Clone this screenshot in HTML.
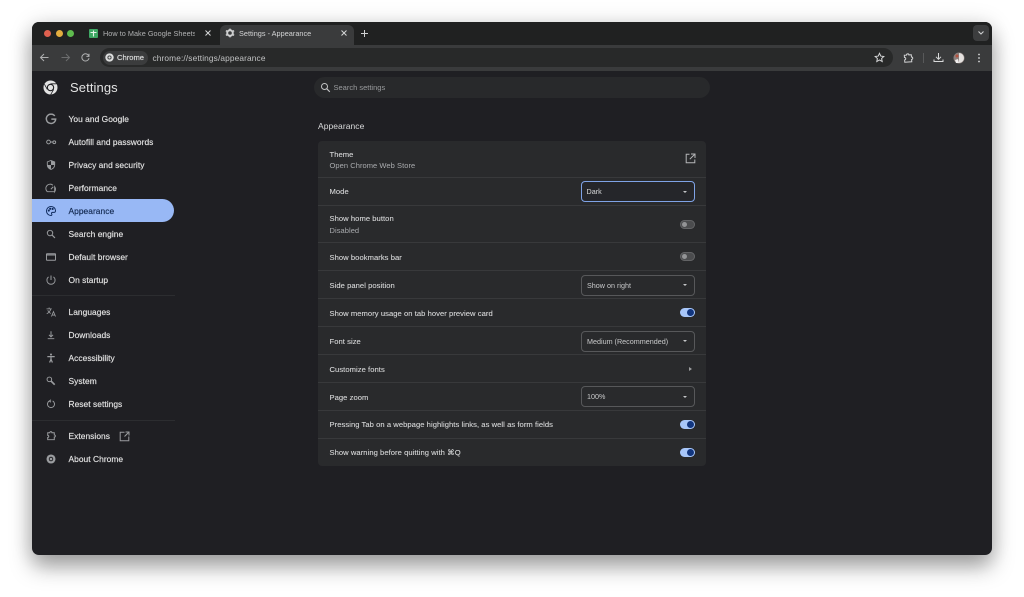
<!DOCTYPE html>
<html lang="en"><head><meta charset="utf-8"><title>Settings - Appearance</title>
<style>
html,body{margin:0;padding:0;background:#fff;width:1024px;height:597px;overflow:hidden}
body{font-family:"Liberation Sans",sans-serif;position:relative}
#all{position:absolute;left:0;top:0;width:1024px;height:597px;filter:blur(.3px)}
.a{position:absolute}
.t{position:absolute;white-space:nowrap;line-height:12px}
#win{position:absolute;left:32px;top:22px;width:960px;height:533px;border-radius:7px;background:#1f1f23;box-shadow:0 12px 22px rgba(0,0,0,.34),0 2px 24px rgba(0,0,0,.14);overflow:hidden}
.nav{position:absolute;left:68.5px;font-size:8.4px;color:#e3e3e3;line-height:12px;white-space:nowrap;font-weight:400;letter-spacing:.05px;-webkit-text-stroke:.15px #e3e3e3}
.ic{position:absolute;left:44px;width:14px;height:14px;fill:none;stroke:#9a9c9f;stroke-width:1.2;transform:scale(.82)}
.row{position:absolute;left:318px;width:388px;border-top:1px solid #38393b}
.lb{position:absolute;left:329.5px;font-size:7.6px;color:#d6d7d8;line-height:12px;white-space:nowrap;letter-spacing:.057px;-webkit-text-stroke:.1px #d6d7d8}
.sub{color:#a9abae;font-size:7.5px;letter-spacing:.06px;-webkit-text-stroke:0}
.sel{position:absolute;left:581px;width:112px;height:19px;border:1px solid #57585a;border-radius:4px;font-size:7.2px;color:#c9cacb;line-height:19px;text-indent:5px;box-sizing:content-box}
.sel:after{content:"";position:absolute;right:7px;top:8.500px;border:2px solid transparent;border-top:2.400px solid #c4c5c7;border-bottom:0}
.tg{position:absolute;left:680px;width:15px;height:9px;border-radius:5px}
.on{background:#a8c7fa}.on:after{content:"";position:absolute;right:1px;top:1px;width:7px;height:7px;border-radius:50%;background:#12367f}
.off{background:#4b4c4e;box-shadow:inset 0 0 0 1px #626365}.off:after{content:"";position:absolute;left:2px;top:2px;width:5px;height:5px;border-radius:50%;background:#939496}
.sep{position:absolute;left:32px;width:143px;height:1px;background:#2c2d30}
</style></head><body><div id="all">
<div id="win"></div>
<div class="a" style="left:32px;top:22px;width:960px;height:24px;background:#202121;border-radius:7px 7px 0 0"></div>
<div class="a" style="left:32px;top:45px;width:960px;height:26px;background:#3a3b3c"></div>
<div class="a" style="left:44px;top:30px;width:7px;height:7px;border-radius:50%;background:#e0604f"></div>
<div class="a" style="left:56px;top:30px;width:7px;height:7px;border-radius:50%;background:#e3ad3f"></div>
<div class="a" style="left:67px;top:30px;width:7px;height:7px;border-radius:50%;background:#5fbb4e"></div>

<svg class="a" style="left:89px;top:29px" width="9" height="9" viewBox="0 0 9 9"><rect width="9" height="9" rx="1" fill="#3fa764"/><path d="M1.500 3.500h6M4.500 1.500v6" stroke="#e6f3ea" stroke-width="1.100"/></svg>
<div class="t" style="left:103px;top:27.500px;font-size:7.300px;color:#b0b1b2;width:92px;overflow:hidden;letter-spacing:.02px">How to Make Google Sheets Da</div>
<svg class="a" style="left:204px;top:29px" width="8" height="8" viewBox="0 0 8 8"><path d="M1.500 1.500l5 5M6.500 1.500l-5 5" stroke="#d5d6d7" stroke-width="1"/></svg>

<div class="a" style="left:220px;top:25px;width:134px;height:20px;background:#3a3b3c;border-radius:6px 6px 0 0"></div>
<svg class="a" style="left:225px;top:28px" width="10" height="10" viewBox="0 0 10 10"><circle cx="5" cy="5" r="2.800" fill="none" stroke="#cfd0d1" stroke-width="2"/><path d="M5 .6v2M5 7.400v2M.9 2.700l1.800 1M7.300 6.300l1.800 1M.9 7.300l1.800-1M7.300 3.700l1.800-1" stroke="#cfd0d1" stroke-width="1.500"/></svg>
<div class="t" style="left:239px;top:27.500px;font-size:7.300px;color:#d4d5d6;letter-spacing:.02px">Settings - Appearance</div>
<svg class="a" style="left:340px;top:29px" width="8" height="8" viewBox="0 0 8 8"><path d="M1.500 1.500l5 5M6.500 1.500l-5 5" stroke="#d5d6d7" stroke-width="1"/></svg>
<svg class="a" style="left:360px;top:29px" width="9" height="9" viewBox="0 0 9 9"><path d="M4.500 1v7M1 4.500h7" stroke="#cfd0d1" stroke-width="1"/></svg>

<div class="a" style="left:973px;top:25px;width:16px;height:16px;border-radius:4px;background:#3c3d3e"></div>
<svg class="a" style="left:977px;top:30px" width="8" height="6" viewBox="0 0 8 6"><path d="M1.500 1.500L4 4l2.500-2.500" fill="none" stroke="#cfd0d1" stroke-width="1.100"/></svg>

<svg class="a" style="left:39px;top:52px" width="11" height="11" viewBox="0 0 11 11"><path d="M9.500 5.500h-8M5 2L1.500 5.500 5 9" fill="none" stroke="#aeafb0" stroke-width="1"/></svg>
<svg class="a" style="left:60px;top:52px" width="11" height="11" viewBox="0 0 11 11"><path d="M1.500 5.500h8M6 2l3.500 3.500L6 9" fill="none" stroke="#6c6d6e" stroke-width="1"/></svg>
<svg class="a" style="left:80px;top:52px" width="11" height="11" viewBox="0 0 11 11"><path d="M8.800 4A3.600 3.600 0 1 0 9 6.200M9 1.800v2.600H6.400" fill="none" stroke="#aeafb0" stroke-width="1"/></svg>

<div class="a" style="left:100px;top:48px;width:793px;height:19px;border-radius:10px;background:#282929"></div>
<div class="a" style="left:103px;top:50.500px;width:45px;height:14px;border-radius:7px;background:#3b3c3d"></div>
<svg class="a" style="left:105px;top:53px" width="9" height="9" viewBox="0 0 14 14"><circle cx="7" cy="7" r="6.500" fill="#dcdddd"/><circle cx="7" cy="7" r="3.200" fill="#3b3c3d"/><circle cx="7" cy="7" r="1.800" fill="#dcdddd"/></svg>
<div class="t" style="left:117px;top:52px;font-size:7.600px;color:#dcdddd;-webkit-text-stroke:.15px #dcdddd">Chrome</div>
<div class="t" style="left:152.500px;top:52px;font-size:8.300px;color:#c2c3c4;letter-spacing:.135px">chrome://settings/appearance</div>

<svg class="a" style="left:874px;top:52px" width="11" height="11" viewBox="0 0 11 11"><path d="M5.500 1.300l1.300 2.800 3 .4-2.200 2 .6 3-2.700-1.500L2.800 9.500l.6-3-2.200-2 3-.4z" fill="none" stroke="#d5d6d7" stroke-width="1"/></svg>
<svg class="a" style="left:902px;top:52px" width="12" height="12" viewBox="0 0 12 12"><path d="M2.500 3h2.200a1.200 1.200 0 0 1 2.400 0h2.400v2.300a1.200 1.200 0 0 1 0 2.400V10H2.500V7.700a1.200 1.200 0 0 0 0-2.400z" transform="rotate(-4 6 6)" fill="none" stroke="#d2d3d4" stroke-width="1"/></svg>
<div class="a" style="left:923px;top:53px;width:1px;height:10px;background:#58595a"></div>
<svg class="a" style="left:933px;top:52px" width="11" height="11" viewBox="0 0 11 11"><path d="M5.500 1v6M3 4.800l2.500 2.500L8 4.800M1 7.500v2h9v-2" fill="none" stroke="#d8d9da" stroke-width="1"/></svg>
<svg class="a" style="left:953px;top:52px" width="12" height="12" viewBox="0 0 12 12"><circle cx="6" cy="6" r="5.500" fill="#8b7f7c"/><path d="M6 1a5 5 0 0 1 0 10z" fill="#e4e1df"/><circle cx="4" cy="4" r="1.500" fill="#b5523f"/><path d="M2 8l3-1 1 4H3z" fill="#f0eeee"/></svg>
<svg class="a" style="left:977px;top:52px" width="4" height="12" viewBox="0 0 4 12"><circle cx="2" cy="2.500" r=".9" fill="#d5d6d7"/><circle cx="2" cy="6" r=".9" fill="#d5d6d7"/><circle cx="2" cy="9.500" r=".9" fill="#d5d6d7"/></svg>

<svg class="a" style="left:43px;top:80px" width="15" height="15" viewBox="0 0 15 15"><circle cx="7.500" cy="7.500" r="7" fill="#e3e3e3"/><circle cx="7.500" cy="7.500" r="3.700" fill="#1f1f23"/><circle cx="7.500" cy="7.500" r="2.600" fill="#e3e3e3"/><path d="M7.500 3.800h6M4.300 9.400L1.400 4.200M10.700 9.400l-3 5.200" stroke="#1f1f23" stroke-width=".8"/></svg>
<div class="t" style="left:70px;top:81px;font-size:13px;line-height:14px;color:#e3e3e3;letter-spacing:.1px">Settings</div>

<div class="a" style="left:32px;top:199px;width:142px;height:23px;background:#98b8f5;border-radius:0 12px 12px 0"></div>

<svg class="ic" style="top:112px" viewBox="0 0 14 14"><path d="M11.600 3.300A5.700 5.700 0 1 0 12.700 7.200H7.400" stroke-width="1.800"/></svg>
<div class="nav" style="top:113px">You and Google</div>
<svg class="ic" style="top:135px" viewBox="0 0 14 14"><circle cx="4" cy="7" r="2.300"/><circle cx="11" cy="7.300" r="1.700"/><path d="M6.300 7h3"/></svg>
<div class="nav" style="top:135.700px">Autofill and passwords</div>
<svg class="ic" style="top:158px" viewBox="0 0 14 14"><path d="M7 1.500l4.500 1.700v3.500c0 2.800-2 4.800-4.500 5.800-2.500-1-4.500-3-4.500-5.800V3.200z" stroke-width="1.100"/><path d="M7 1.500v5.500H2.500c0 2.800 2 4.800 4.500 5.800V7h4.500V3.200z" fill="#9a9c9f" stroke="none"/></svg>
<div class="nav" style="top:158.700px">Privacy and security</div>
<svg class="ic" style="top:181px" viewBox="0 0 14 14"><path d="M2.500 11.500A5.200 5.200 0 0 1 9.300 3.600M11.500 5.500c1.300 2 1 4.500 0 6zM2.500 11.500h9M6.800 8.500L9.800 5.500"/></svg>
<div class="nav" style="top:181.700px">Performance</div>
<svg class="ic" style="top:204px;stroke:#0f2a5c" viewBox="0 0 14 14"><path d="M7 1.500a5.500 5.500 0 1 0 0 11c1.300 0 1.300-1.200.8-2-.5-.9 0-1.800 1-1.800h1.700c1.200 0 2-1 2-2.200C12.500 3.500 10 1.500 7 1.500z" stroke-width="1.200"/><circle cx="4.300" cy="6.500" r=".7" fill="#0f2a5c"/><circle cx="6" cy="4.300" r=".7" fill="#0f2a5c"/><circle cx="9" cy="4.500" r=".7" fill="#0f2a5c"/></svg>
<div class="nav" style="top:204.700px;color:#12284f;-webkit-text-stroke:.15px #12284f">Appearance</div>
<svg class="ic" style="top:227px" viewBox="0 0 14 14"><circle cx="5.800" cy="5.800" r="3.300"/><path d="M8.300 8.300l3.500 3.500" stroke-width="1.400"/></svg>
<div class="nav" style="top:227.700px">Search engine</div>
<svg class="ic" style="top:250px" viewBox="0 0 14 14"><rect x="1.500" y="3" width="11" height="8" rx=".6"/><path d="M1.500 4.500h11" stroke-width="1.400"/></svg>
<div class="nav" style="top:250.500px">Default browser</div>
<svg class="ic" style="top:273px" viewBox="0 0 14 14"><path d="M7 1.500v5.500M4 3.200a5 5 0 1 0 6 0"/></svg>
<div class="nav" style="top:273.500px">On startup</div>

<div class="sep" style="top:295px"></div>

<svg class="ic" style="top:305px" viewBox="0 0 14 14"><path d="M1.500 3.200h6.500M4.700 1.500v1.700M6.800 3.200c-.6 2.600-2.500 4.800-5 6M3 5c.8 1.700 2.200 3 3.700 3.800M7.500 12.500l2.500-6 2.500 6M8.400 10.700h3.200" stroke-width="1"/></svg>
<div class="nav" style="top:305.700px">Languages</div>
<svg class="ic" style="top:328px" viewBox="0 0 14 14"><path d="M7 2.500v6.500M4.500 6.800L7 9.300l2.500-2.500M3 11.500h8"/></svg>
<div class="nav" style="top:328.700px">Downloads</div>
<svg class="ic" style="top:351px" viewBox="0 0 14 14"><circle cx="7" cy="2.800" r="1.300" fill="#9a9c9f" stroke="none"/><path d="M2.500 5.300h9M7 5.300v3.500M7 8.500l-1.700 4M7 8.500l1.700 4" stroke-width="1.500"/></svg>
<div class="nav" style="top:351.700px">Accessibility</div>
<svg class="ic" style="top:374px" viewBox="0 0 14 14"><circle cx="5" cy="5" r="2.800"/><path d="M7 7l4.500 4.500" stroke-width="2"/></svg>
<div class="nav" style="top:374.700px">System</div>
<svg class="ic" style="top:397px" viewBox="0 0 14 14"><path d="M5 3.300a4.300 4.300 0 1 0 4 0M7 1.800l-2 1.500 2 1.500"/></svg>
<div class="nav" style="top:397.700px">Reset settings</div>

<div class="sep" style="top:420px"></div>

<svg class="ic" style="top:429px" viewBox="0 0 14 14"><path d="M3 3h2.500a1.300 1.300 0 0 1 2.600 0H11v2.700a1.300 1.300 0 0 1 0 2.600V11.500H3V8.800a1.300 1.300 0 0 0 0-2.600z"/></svg>
<div class="nav" style="top:430px">Extensions</div>
<svg class="a" style="left:119px;top:431px" width="11" height="11" viewBox="0 0 11 11"><path d="M5.500 1.200H1.200v8.600h8.600V5.500M6.500 1h3.500v3.500M10 1L5.500 5.500" fill="none" stroke="#9a9c9f" stroke-width="1"/></svg>
<svg class="ic" style="top:452px" viewBox="0 0 14 14"><circle cx="7" cy="7" r="5.500" fill="#9a9c9f" stroke="none"/><circle cx="7" cy="7" r="2.700" fill="#1f1f23" stroke="none"/><circle cx="7" cy="7" r="1.600" fill="#9a9c9f" stroke="none"/></svg>
<div class="nav" style="top:453px">About Chrome</div>

<div class="a" style="left:314px;top:77px;width:396px;height:21px;border-radius:11px;background:#28292b"></div>
<svg class="a" style="left:320px;top:82px" width="11" height="11" viewBox="0 0 11 11"><circle cx="4.500" cy="4.500" r="3" fill="none" stroke="#c2c3c4" stroke-width="1"/><path d="M6.800 6.800l3 3" stroke="#c2c3c4" stroke-width="1.100"/></svg>
<div class="t" style="left:333.500px;top:81.500px;font-size:7.500px;color:#999b9d">Search settings</div>

<div class="t" style="left:318px;top:120px;font-size:8.500px;color:#d9dadb;letter-spacing:.05px">Appearance</div>

<div class="a" style="left:318px;top:141px;width:388px;height:325px;border-radius:4px;background:#292a2c"></div>

<div class="lb" style="top:148.500px">Theme</div>
<div class="lb sub" style="top:159.500px">Open Chrome Web Store</div>
<svg class="a" style="left:685px;top:153px" width="11" height="11" viewBox="0 0 11 11"><path d="M4.500 1.200H1.200v8.600h8.600V6.500M6 1h4v4M10 1L4.800 6.200" fill="none" stroke="#b5b6b8" stroke-width="1"/></svg>

<div class="row" style="top:177px"></div>
<div class="lb" style="top:185.500px">Mode</div>
<div class="sel" style="top:181px;left:580.500px;border:1.500px solid #7fa3e6;border-radius:4px;background:#25262a;color:#d8d9da">Dark</div>

<div class="row" style="top:205px"></div>
<div class="lb" style="top:212.500px">Show home button</div>
<div class="lb sub" style="top:224.500px">Disabled</div>
<div class="tg off" style="top:219.700px"></div>

<div class="row" style="top:242px"></div>
<div class="lb" style="top:251.500px">Show bookmarks bar</div>
<div class="tg off" style="top:252.300px"></div>

<div class="row" style="top:270px"></div>
<div class="lb" style="top:279.500px">Side panel position</div>
<div class="sel" style="top:274.500px">Show on right</div>

<div class="row" style="top:298px"></div>
<div class="lb" style="top:307.500px">Show memory usage on tab hover preview card</div>
<div class="tg on" style="top:308.300px"></div>

<div class="row" style="top:326px"></div>
<div class="lb" style="top:335.500px">Font size</div>
<div class="sel" style="top:330.500px">Medium (Recommended)</div>

<div class="row" style="top:354px"></div>
<div class="lb" style="top:363.500px">Customize fonts</div>
<div class="a" style="left:689px;top:366.500px;border:2.500px solid transparent;border-left:3px solid #9c9d9f;border-right:0"></div>

<div class="row" style="top:382px"></div>
<div class="lb" style="top:391.500px">Page zoom</div>
<div class="sel" style="top:386px">100%</div>

<div class="row" style="top:410px"></div>
<div class="lb" style="top:419px">Pressing Tab on a webpage highlights links, as well as form fields</div>
<div class="tg on" style="top:420px"></div>

<div class="row" style="top:438px"></div>
<div class="lb" style="top:446.500px">Show warning before quitting with ⌘Q</div>
<div class="tg on" style="top:448px"></div>
</div></body></html>
